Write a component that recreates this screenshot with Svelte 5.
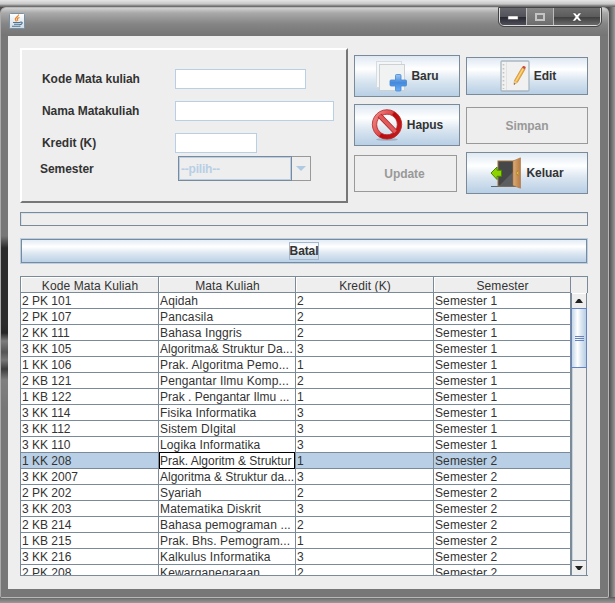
<script>
    const fields = [
        { label: 'Kode Mata kuliah', size: 'kode' },
        { label: 'Nama Matakuliah', size: 'nama' },
        { label: 'Kredit (K)', size: 'kredit' },
    ];

    const columns = ['Kode Mata Kuliah', 'Mata Kuliah', 'Kredit (K)', 'Semester'];

    const rows = [
        ['2 PK 101', 'Aqidah', 2, 'Semester 1'],
        ['2 PK 107', 'Pancasila', 2, 'Semester 1'],
        ['2 KK 111', 'Bahasa Inggris', 2, 'Semester 1'],
        ['3 KK 105', 'Algoritma& Struktur Da...', 3, 'Semester 1'],
        ['1 KK 106', 'Prak. Algoritma Pemo...', 1, 'Semester 1'],
        ['2 KB 121', 'Pengantar Ilmu Komp...', 2, 'Semester 1'],
        ['1 KB 122', 'Prak . Pengantar Ilmu ...', 1, 'Semester 1'],
        ['3 KK 114', 'Fisika Informatika', 3, 'Semester 1'],
        ['3 KK 112', 'Sistem DIgital', 3, 'Semester 1'],
        ['3 KK 110', 'Logika Informatika', 3, 'Semester 1'],
        ['1 KK 208', 'Prak. Algoritm & Struktur', 1, 'Semester 2'],
        ['3 KK 2007', 'Algoritma & Struktur da...', 3, 'Semester 2'],
        ['2 PK 202', 'Syariah', 2, 'Semester 2'],
        ['3 KK 203', 'Matematika Diskrit', 3, 'Semester 2'],
        ['2 KB 214', 'Bahasa pemograman ...', 2, 'Semester 2'],
        ['1 KB 215', 'Prak. Bhs. Pemogram...', 1, 'Semester 2'],
        ['3 KK 216', 'Kalkulus Informatika', 3, 'Semester 2'],
        ['2 PK 208', 'Kewarganegaraan', 2, 'Semester 2'],
    ];

    let selected = $state(10);

    // longest names need tighter tracking to fit the column
    const isLong = (value) => String(value).length > 24;
</script>

<div class="desktop">
    <div class="window">
        <header class="titlebar">
            <svg class="java" width="16" height="16" viewBox="0 0 16 16">
                <defs>
                    <linearGradient id="cup" x1="0" y1="0" x2="0" y2="1">
                        <stop offset="0" stop-color="#fff" />
                        <stop offset="1" stop-color="#cfdbe5" />
                    </linearGradient>
                </defs>
                <rect x=".5" y=".5" width="15" height="15" rx="1" fill="url(#cup)" stroke="#7890a4" />
                <path d="M9.5 1.5C10 4 5 4.5 6.5 7L7.5 8.3M10.5 4.5C8 5.5 8 6 8.8 7.8" fill="none" stroke="#e8862c" stroke-width="1.3" />
                <path d="M4 9.5H11M5 11.3H10.5M3 13.3H11.5M11 9.2C14.5 8.5 13.5 11.5 10.5 11.6" fill="none" stroke="#4c7390" stroke-width="1.1" />
            </svg>
            <div class="controls">
                <button class="min" aria-label="Minimize">
                    <svg width="12" height="8" viewBox="0 0 12 8"><rect x="1" y="3" width="10" height="3.4" fill="#fff" stroke="#555" stroke-width=".5" /></svg>
                </button>
                <button class="max" aria-label="Maximize">
                    <svg width="12" height="10" viewBox="0 0 12 10"><rect x="2" y="2" width="8" height="6" fill="none" stroke="#c4c4c4" stroke-width="2" /></svg>
                </button>
                <button class="close" aria-label="Close">
                    <svg width="12" height="10" viewBox="0 0 12 10"><path d="M1.5 1H4.3L6 3 7.7 1H10.5L7.6 4.9 10.7 9H7.8L6 6.8 4.2 9H1.3L4.4 4.9Z" fill="#fff" stroke="#444" stroke-width=".5" /></svg>
                </button>
            </div>
        </header>

        <main class="content">
            <section class="top">
                <div class="panel">
                    {#each fields as field}
                        <div class="field">
                            <label for={field.size}>{field.label}</label>
                            <input id={field.size} class={field.size} type="text" />
                        </div>
                    {/each}
                    <div class="field semester">
                        <span class="label">Semester</span>
                        <div class="combo">
                            <span class="value">--pilih--</span>
                            <span class="arrow">
                                <svg width="10" height="5" viewBox="0 0 10 5"><path d="M0 0H10L5 5Z" fill="#b0cae2" /></svg>
                            </span>
                        </div>
                    </div>
                </div>

                <div class="actions left">
                    <button class="btn">
                        <svg width="32" height="32" viewBox="0 0 32 32">
                            <defs>
                                <linearGradient id="plus" x1="0" y1="0" x2="0" y2="1">
                                    <stop offset="0" stop-color="#9cc6f2" />
                                    <stop offset=".5" stop-color="#4489dc" />
                                    <stop offset="1" stop-color="#68b0fa" />
                                </linearGradient>
                            </defs>
                            <rect x="1.5" y="1.5" width="25" height="26" fill="#f4f6f7" stroke="#d6dce1" />
                            <rect x="4.5" y="4.5" width="25" height="26" fill="#f1f2f2" stroke="#ccd1d5" />
                            <path d="M20.5 15.5q0-1 1-1h3.5q1 0 1 1v4.500h4.500q1 0 1 1v4q0 1-1 1H26V30q0 1-1 1h-3.500q-1 0-1-1V26H16q-1 0-1-1V21q0-1 1-1h4.500Z" fill="url(#plus)" stroke="#4588d4" stroke-width=".8" />
                        </svg>
                        <span>Baru</span>
                    </button>
                    <button class="btn">
                        <svg width="32" height="32" viewBox="0 0 32 32">
                            <defs>
                                <linearGradient id="ban" x1="0" y1="0" x2="1" y2=".6">
                                    <stop offset="0" stop-color="#f39a9a" />
                                    <stop offset=".55" stop-color="#df4546" />
                                    <stop offset=".6" stop-color="#b80a0c" />
                                    <stop offset="1" stop-color="#c41a1b" />
                                </linearGradient>
                            </defs>
                            <ellipse cx="16" cy="30.5" rx="11" ry="1.3" fill="#8797a8" opacity=".6" />
                            <path d="M16 .7a14.7 14.7 0 1 0 .01 0ZM16 5.2a10.3 10.3 0 1 1-.01 0Z" fill="url(#ban)" fill-rule="evenodd" stroke="#b32627" stroke-width=".8" />
                            <path d="M8.5 6.500L24.500 23" stroke="#ad2021" stroke-width="5.2" />
                            <path d="M8.5 6.500L24.500 23" stroke="#e05a5b" stroke-width="3.8" />
                        </svg>
                        <span>Hapus</span>
                    </button>
                    <button class="btn off" disabled>Update</button>
                </div>

                <div class="actions right">
                    <button class="btn edit">
                        <svg width="32" height="32" viewBox="0 0 32 32">
                            <rect x="3" y="1" width="28" height="30" rx="1" fill="#f1f1f1" stroke="#a9b7c2" stroke-width="1.3" />
                            <path d="M8.5 2V30" stroke="#e2e2e2" />
                            <path d="M5.5 4V29" stroke="#c4c4c4" stroke-width="1.6" stroke-dasharray="1.5 2.5" />
                            <path d="M16.5 20.5L24 7.5 27 9.2 19.5 22.2 16 24.5Z" fill="#efb043" stroke="#c98a2c" stroke-width=".7" />
                            <path d="M18 21L25.3 8.5" stroke="#fbd98a" stroke-width="1.2" />
                            <path d="M24 7.5L25 6Q27.5 5.5 27.8 7.6L27 9.2Z" fill="#cc4c44" />
                            <path d="M16 24.5L16.5 20.7 19 22.4Z" fill="#e9d2a8" />
                            <path d="M16 24.8L16.2 23 17.3 23.7Z" fill="#555" />
                        </svg>
                        <span>Edit</span>
                    </button>
                    <button class="btn off" disabled>Simpan</button>
                    <button class="btn exit">
                        <svg width="32" height="32" viewBox="0 0 32 32">
                            <defs>
                                <linearGradient id="door" x1="0" y1="0" x2="1" y2="0">
                                    <stop offset="0" stop-color="#dcac77" />
                                    <stop offset="1" stop-color="#b87a42" />
                                </linearGradient>
                            </defs>
                            <path d="M1 29.5H26" stroke="#596978" />
                            <rect x="8" y="4" width="16" height="25" fill="#454749" stroke="#9d7041" stroke-width="1" />
                            <path d="M9 29L24 14V29Z" fill="#5c5e60" />
                            <path d="M23 4L30.5 .8V31.2L23 28.5Z" fill="url(#door)" stroke="#a77345" stroke-width=".6" />
                            <rect x="27" y="14" width="1.6" height="4" fill="#efd25d" stroke="#aa7b14" stroke-width=".5" />
                            <path d="M1 16L7 10V13.2H11.5V19.3H7V22.5Z" fill="#8ed300" stroke="#468900" />
                        </svg>
                        <span>Keluar</span>
                    </button>
                </div>
            </section>

            <div class="progress"></div>

            <button class="batal"><span>Batal</span></button>

            <section class="table">
                <div class="grid">
                    <div class="row head">
                        {#each columns as column}
                            <div class="cell">{column}</div>
                        {/each}
                    </div>
                    {#each rows as row, i}
                        <div class="row" class:selected={i === selected}>
                            {#each row as value, c}
                                <div class="cell" class:code={c === 0} class:name={c === 1} class:long={isLong(value)} class:focus={i === selected && c === 1}>{value}</div>
                            {/each}
                        </div>
                    {/each}
                </div>
                <div class="side">
                    <div class="corner"></div>
                    <div class="scrollbar">
                        <div class="arrow-btn">
                            <svg width="8" height="4" viewBox="0 0 8 4"><path d="M0 4H8L5 0H3Z" fill="#222" /></svg>
                        </div>
                        <div class="thumb"><i></i><i></i><i></i></div>
                        <div class="arrow-btn down">
                            <svg width="8" height="4" viewBox="0 0 8 4"><path d="M0 0H8L5 4H3Z" fill="#222" /></svg>
                        </div>
                    </div>
                </div>
            </section>
        </main>
    </div>
</div>

<style>
    :global(body) {
        margin: 0;
        overflow: hidden;
    }
    .desktop {
        width: 615px;
        height: 603px;
        box-sizing: border-box;
        padding-top: 7px;
        font-family: "Liberation Sans", Arial, sans-serif;
        font-size: 12px;
        color: #333;
        background:
            linear-gradient(#e4e4e4, #c8c8c8 4px, #777 6px, #666 7px) top / 100% 7px no-repeat,
            linear-gradient(#555, #777 2px, #999) bottom / 100% 6px no-repeat,
            linear-gradient(90deg, #4c4c4c 0 609px, #5a5a5a 610px, #999 615px);
    }
    button {
        font: inherit;
        margin: 0;
        padding: 0;
    }
    .window {
        width: 609px;
        height: 591px;
        box-sizing: border-box;
        border: 1px solid #b8b8b8;
        border-left-color: #aaa;
        border-radius: 6px 6px 2px 2px;
        padding: 0 7px;
        background:
            linear-gradient(#d2d2d2, #a9a9a9 5px, #858585 16px, #747474 28px) top / 100% 28px no-repeat,
            linear-gradient(transparent 228px, #2b2b2b 240px 315px, #262626 325px, #7c7c7c 333px, #555 344px, #777 352px, #3c3c3c 361px, #808080 372px, transparent 400px) left / 7px 100% no-repeat,
            #777;
    }
    .titlebar {
        height: 28px;
        display: flex;
        justify-content: space-between;
        align-items: flex-start;
    }
    .java {
        margin: 5px 0 0 1px;
    }
    .controls {
        display: flex;
        height: 17px;
        border: 1px solid #ddd;
        border-top: none;
        border-radius: 0 0 5px 5px;
        outline: 1px solid #444;
        overflow: hidden;
    }
    .controls button {
        display: flex;
        align-items: center;
        justify-content: center;
        border: none;
        border-right: 1px solid #bbb;
        background: linear-gradient(#6e6e6e, #5c5c5c 50%, #3c3c3c 51%, #6a6a6a);
    }
    .controls .min {
        width: 27px;
        background: linear-gradient(#65656c, #52525a 50%, #25252d 51%, #4f4f5b);
    }
    .controls .max {
        width: 27px;
        background: linear-gradient(#888, #6d6d6d);
    }
    .controls .close {
        width: 46px;
        border-right: none;
    }

    .content {
        width: 592px;
        height: 553px;
        box-sizing: border-box;
        padding: 12px 12px 0;
        background: #eee;
    }
    .top {
        display: flex;
        height: 155px;
    }
    .panel {
        width: 328px;
        height: 155px;
        box-sizing: border-box;
        border: 2px solid #fff;
        border-right-color: #777;
        border-bottom-color: #777;
        padding: 19px 0 0 20px;
    }
    .field {
        display: flex;
        height: 20px;
        margin-bottom: 12px;
        align-items: center;
        font-weight: bold;
    }
    .field label, .field .label {
        width: 133px;
        white-space: nowrap;
        letter-spacing: -.05px;
    }
    .field input {
        height: 20px;
        box-sizing: border-box;
        border: 1px solid #b8cfe5;
        background: #fff;
        padding: 0;
    }
    input.kode {
        width: 131px;
    }
    input.nama {
        width: 159px;
    }
    input.kredit {
        width: 82px;
    }
    .field.semester {
        height: 25px;
        margin: -9px 0 0 -2px;
    }
    .field.semester .label {
        width: 138px;
    }
    .combo {
        display: flex;
        width: 133px;
        height: 25px;
        box-sizing: border-box;
        border: 1px solid #999;
        color: #b8cfe5;
    }
    .combo .value {
        width: 114px;
        box-sizing: border-box;
        margin: -1px 0 -1px -1px;
        border: 1px solid #7a8a99;
        box-shadow: inset 0 0 0 1px #b8cfe5;
        padding-left: 2px;
        line-height: 24px;
        letter-spacing: -.2px;
    }
    .combo .arrow {
        flex: 1;
        display: flex;
        align-items: center;
        justify-content: center;
    }

    .actions {
        display: flex;
        flex-direction: column;
        font-weight: bold;
    }
    .actions.left {
        width: 106px;
        padding-top: 7px;
        margin-left: 6px;
        gap: 7px;
    }
    .actions.right {
        width: 122px;
        padding-top: 9px;
        margin-left: 6px;
    }
    .btn {
        display: flex;
        align-items: center;
        justify-content: center;
        gap: 4px;
        height: 42px;
        flex: none;
        box-sizing: border-box;
        border: 1px solid #7a8a99;
        color: #333;
        letter-spacing: -.05px;
        background: linear-gradient(#dfe9f3, #fff 32%, #dce7f1 60%, #b8cfe5);
    }
    .btn.edit {
        height: 38px;
        margin-bottom: 12px;
    }
    .btn.exit {
        margin-top: 8px;
    }
    .btn.off {
        height: 37px;
        border-color: #999;
        color: #999;
        background: #eee;
    }
    .left .btn.off {
        width: 103px;
        margin-top: 2px;
        padding-right: 2px;
    }

    .progress {
        height: 14px;
        box-sizing: border-box;
        margin-top: 9px;
        border: 1px solid #7a8a99;
        box-shadow: inset 1px 1px 0 #d5e2ee;
    }
    .batal {
        display: flex;
        align-items: center;
        justify-content: center;
        width: 568px;
        height: 26px;
        margin-top: 12px;
        box-sizing: border-box;
        border: 1px solid #b8cfe5;
        box-shadow: inset 0 0 0 1px #7a8a99;
        background: linear-gradient(#dfe9f3, #fff 32%, #dce7f1 60%, #b8cfe5);
        color: #333;
        font-weight: bold;
    }
    .batal span {
        height: 16px;
        line-height: 17px;
        border: 1px solid #a3b8cc;
        letter-spacing: -.1px;
    }

    .table {
        display: flex;
        width: 568px;
        height: 300px;
        margin-top: 12px;
        box-sizing: border-box;
        border-top: 1px solid #7a8a99;
        border-bottom: 1px solid #7a8a99;
        overflow: hidden;
    }
    .grid {
        width: 551px;
        box-sizing: border-box;
        border-right: 1px solid #7a8a99;
    }
    .row {
        display: grid;
        grid-template-columns: 138px 137px 138px 137px;
        height: 16px;
        background: #fff;
    }
    .row.head {
        background: #eee;
        text-align: center;
    }
    .row.selected {
        background: #b8cfe5;
    }
    .cell {
        box-sizing: border-box;
        height: 16px;
        line-height: 17px;
        border-left: 1px solid #7a8a99;
        border-bottom: 1px solid #7a8a99;
        padding-left: 1px;
        white-space: nowrap;
        overflow: hidden;
        letter-spacing: .1px;
    }
    .head .cell {
        padding: 1px 0 0 1px;
        box-shadow: inset 1px 1px 0 #fff;
        letter-spacing: .1px;
    }
    .cell.code {
        letter-spacing: 0;
    }
    .cell.name {
        letter-spacing: .13px;
    }
    .cell.name.long {
        letter-spacing: 0;
    }
    .cell.focus {
        height: 17px;
        margin: -1px 0 0 1px;
        padding-left: 0;
        border: 1px solid #000;
        box-shadow: -1px 0 0 #7a8a99;
        background: #fff;
        z-index: 1;
    }
    .side {
        width: 17px;
        display: flex;
        flex-direction: column;
    }
    .corner {
        height: 16px;
        box-sizing: border-box;
        border-right: 1px solid #7a8a99;
    }
    .scrollbar {
        flex: 1;
        display: flex;
        flex-direction: column;
        width: 16px;
        box-sizing: border-box;
        border-left: 1px solid #7a8a99;
        border-right: 1px solid #7a8a99;
        box-shadow: inset 1px 0 0 #c5d3e0;
    }
    .arrow-btn {
        height: 15px;
        box-sizing: border-box;
        display: flex;
        align-items: center;
        justify-content: center;
        border-top: 1px solid #fff;
        background: #eee;
    }
    .arrow-btn.down {
        margin-top: auto;
        border-top-color: #7a8a99;
    }
    .thumb {
        display: flex;
        flex-direction: column;
        align-items: center;
        justify-content: center;
        gap: 1px;
        height: 60px;
        box-sizing: border-box;
        margin: 0 -1px;
        border: 1px solid #6382bf;
        background: linear-gradient(90deg, #c3d6e9, #fff 40%, #dce7f1 65%, #b8cfe5);
    }
    .thumb i {
        width: 9px;
        height: 1px;
        background: #6382bf;
    }
</style>
